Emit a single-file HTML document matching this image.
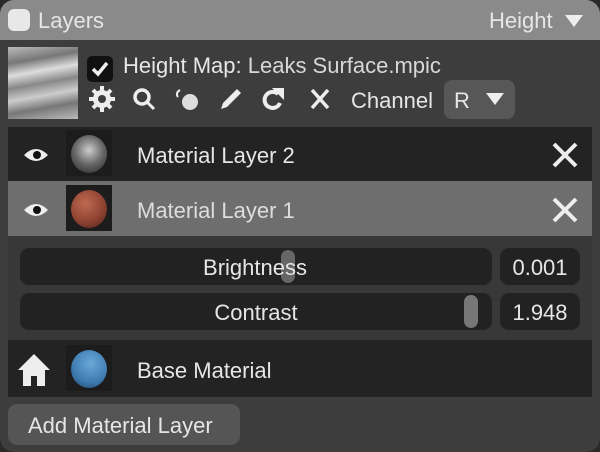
<!DOCTYPE html>
<html><head><style>
body{margin:0;width:600px;height:452px;background:#2a2a2a;font-family:"Liberation Sans",sans-serif;overflow:hidden}
.win{position:absolute;left:0;top:0;width:600px;height:452px;background:#3d3d3d;border-radius:14px;overflow:hidden}
.title{position:absolute;left:0;top:0;width:600px;height:40px;background:#8a8a8a}
.t{position:absolute;color:#e6e6e6;white-space:nowrap;font-size:22px!important}
.list{position:absolute;left:8px;top:127px;width:584px;height:270px;background:#383838}
.row{position:absolute;left:0;width:584px}
.thumb{position:absolute;width:46px;height:46px;background:#1c1c1c}
.ball{position:absolute;left:5px;top:5px;width:36px;height:38px;border-radius:50%}
.sl{position:absolute;background:#222;border-radius:9px}
</style></head><body>
<div class="win">
<div class="title"></div>
<div style="position:absolute;left:8px;top:9px;width:22px;height:22px;background:#e8e8e8;border-radius:6px"></div>
<div class="t" style="left:38px;top:8px">Layers</div>
<div class="t" style="left:489px;top:8px">Height</div>
<svg style="position:absolute;left:564px;top:14px" width="20" height="14"><polygon points="1,1 19,1 10,13" fill="#eee"/></svg>

<div style="position:absolute;left:8px;top:47px;width:70px;height:72px;background:linear-gradient(170deg,#bbb,#777 20%,#ddd 35%,#888 50%,#ccc 65%,#777 80%,#bbb)"></div>
<div style="position:absolute;left:87px;top:56px;width:26px;height:26px;background:#111;border-radius:5px"></div>
<svg style="position:absolute;left:87px;top:56px" width="26" height="26"><path d="M6 13l5 5 9-11" stroke="#eee" stroke-width="3.5" fill="none"/></svg>
<div class="t" style="left:123px;top:53px">Height Map: <span style="color:#d8d8d8">Leaks Surface.mpic</span></div>

<svg style="position:absolute;left:86px;top:84px" width="260" height="30">
<g transform="translate(16,15)" fill="#eee"><circle r="9"/><g stroke="#eee" stroke-width="4"><line x1="-13" y1="0" x2="13" y2="0"/><line y1="-13" y2="13"/><line x1="-9" y1="-9" x2="9" y2="9"/><line x1="-9" y1="9" x2="9" y2="-9"/></g><circle r="4" fill="#3d3d3d"/></g>
<g transform="translate(56,13)"><circle r="7" stroke="#eee" stroke-width="3.5" fill="none"/><line x1="5" y1="5" x2="12" y2="12" stroke="#eee" stroke-width="3"/></g>
<path d="M94 6 q-5 3 -2 7" stroke="#eee" stroke-width="2" fill="none"/><circle cx="104" cy="18" r="8" fill="#ddd"/>
<path d="M135 25 l2 -6 14 -14 4 4 -14 14z" fill="#eee"/>
<path d="M192 10 a8 8 0 1 0 2 9" stroke="#eee" stroke-width="4" fill="none"/><polygon points="186,4 198,4 198,16" fill="#eee"/>
<path d="M226 6 l16 18 M242 6 l-16 18" stroke="#eee" stroke-width="3.5"/>
</svg>
<div class="t" style="left:351px;top:88px">Channel</div>
<div style="position:absolute;left:444px;top:80px;width:71px;height:39px;background:#575757;border-radius:8px"></div>
<div class="t" style="left:454px;top:88px">R</div>
<svg style="position:absolute;left:485px;top:92px" width="20" height="14"><polygon points="1,1 19,1 10,13" fill="#eee"/></svg>

<div class="list">
<div class="row" style="top:0;height:54px;background:#232323"></div>
<div class="row" style="top:54px;height:55px;background:#6e6e6e"></div>
<div class="row" style="top:213px;height:57px;background:#232323"></div>
</div>
<svg style="position:absolute;left:22px;top:146px" width="28" height="18"><path d="M2 9 q12 -12 24 0 q-12 12 -24 0z" fill="#eee"/><circle cx="15" cy="9" r="4" fill="#111"/></svg>
<svg style="position:absolute;left:22px;top:201px" width="28" height="18"><path d="M2 9 q12 -12 24 0 q-12 12 -24 0z" fill="#eee"/><circle cx="15" cy="9" r="4" fill="#111"/></svg>
<div class="thumb" style="left:66px;top:130px"><div class="ball" style="background:radial-gradient(circle at 50% 40%,#ccc,#666 50%,#222)"></div></div>
<div class="thumb" style="left:66px;top:185px"><div class="ball" style="background:radial-gradient(circle at 40% 35%,#c06a50,#8a4030 60%,#4a2018)"></div></div>
<div class="thumb" style="left:66px;top:345px"><div class="ball" style="background:radial-gradient(circle at 55% 35%,#6aa8d8,#3e7ab0 60%,#1e3e60)"></div></div>
<div class="t" style="left:137px;top:143px">Material Layer 2</div>
<div class="t" style="left:137px;top:198px;color:#ddd">Material Layer 1</div>
<div class="t" style="left:137px;top:358px">Base Material</div>
<svg style="position:absolute;left:552px;top:142px" width="26" height="26"><path d="M2 2l22 22M24 2L2 24" stroke="#eee" stroke-width="4"/></svg>
<svg style="position:absolute;left:552px;top:197px" width="26" height="26"><path d="M2 2l22 22M24 2L2 24" stroke="#eee" stroke-width="4"/></svg>
<svg style="position:absolute;left:16px;top:352px" width="36" height="36"><path d="M18 2 L34 18 H29 V34 H21 V24 H15 V34 H7 V18 H2z" fill="#eee"/></svg>

<div class="sl" style="left:20px;top:248px;width:472px;height:37px"></div>
<div style="position:absolute;left:281px;top:250px;width:14px;height:33px;background:#666;border-radius:7px"></div>
<div class="t" style="left:0;width:510px;text-align:center;top:255px">Brightness</div>
<div class="sl" style="left:500px;top:248px;width:80px;height:37px"></div>
<div class="t" style="left:500px;width:80px;text-align:center;top:255px">0.001</div>
<div class="sl" style="left:20px;top:293px;width:472px;height:37px"></div>
<div style="position:absolute;left:464px;top:295px;width:14px;height:33px;background:#777;border-radius:7px"></div>
<div class="t" style="left:0;width:512px;text-align:center;top:300px">Contrast</div>
<div class="sl" style="left:500px;top:293px;width:80px;height:37px"></div>
<div class="t" style="left:500px;width:80px;text-align:center;top:300px">1.948</div>

<div style="position:absolute;left:8px;top:404px;width:232px;height:41px;background:#555;border-radius:9px"></div>
<div class="t" style="left:28px;top:413px">Add Material Layer</div>
</div>
</body></html>
